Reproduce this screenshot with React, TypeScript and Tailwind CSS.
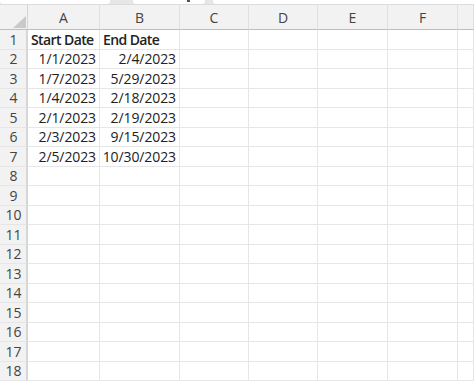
import React from "react";

const cols = ["A", "B", "C", "D", "E", "F", ""];
const data: Record<number, [string, string, boolean?]> = {
  1: ["Start Date", "End Date", true],
  2: ["1/1/2023", "2/4/2023"],
  3: ["1/7/2023", "5/29/2023"],
  4: ["1/4/2023", "2/18/2023"],
  5: ["2/1/2023", "2/19/2023"],
  6: ["2/3/2023", "9/15/2023"],
  7: ["2/5/2023", "10/30/2023"],
};

const rows = Array.from({ length: 18 }, (_, i) => i + 1);

export default function App() {
  return (
    <div
      className="w-[474px] h-[382px] overflow-hidden bg-white text-[#222]"
      style={{ fontFamily: '"Open Sans", "Noto Sans", sans-serif' }}
    >
      {/* toolbar remnants */}
      <div className="h-[4px] flex bg-[#e6e6e6]">
        <div className="w-[110px] bg-white rounded-b-[3px]" />
        <div className="w-[23px]" />
        <div className="w-[72px] bg-white rounded-b-[3px] relative">
          <div className="absolute left-[54px] top-0 w-[3px] h-[2px] bg-[#555]" />
        </div>
        <div className="w-[8px]" />
        <div className="flex-1 bg-white rounded-bl-[3px]" />
      </div>
      <div className="grid grid-cols-[28px_72px_80px_69px_69px_70px_70px_16px] grid-rows-[26px] auto-rows-[19.5px]">
        {/* header row */}
        <div className="bg-[#f2f2f2] border-t border-t-[#dcdcdc] border-b border-b-[#bdbdbd] border-r border-r-[#d4d4d4] relative">
          <svg className="absolute right-[1px] bottom-[1px]" width="13" height="12" viewBox="0 0 13 12">
            <polygon points="0,12 13,12 13,0" fill="#c9c9c9" />
          </svg>
        </div>
        {cols.map((c, i) => (
          <div
            key={i}
            className="bg-[#f2f2f2] border-t border-t-[#dcdcdc] border-b border-b-[#bdbdbd] border-r border-r-[#e0e0e0] flex items-center justify-center text-[14px] text-[#444] pt-[1px]"
          >
            {c}
          </div>
        ))}
        {rows.map((r) => {
          const d = data[r];
          return (
            <React.Fragment key={r}>
              <div className="bg-[#f2f2f2] border-r-2 border-r-[#d6d6d6] border-b border-b-[#e6e6e6] flex items-center justify-center text-[14px] text-[#444] pl-[1px]">
                {r}
              </div>
              {cols.map((_, ci) => {
                let content: React.ReactNode = null;
                let cls = "justify-end pr-[3px] tracking-[-0.1px]";
                if (d && ci < 2) {
                  content = d[ci];
                  if (d[2]) cls = "justify-start pl-[3px] font-semibold tracking-[-0.6px]";
                }
                return (
                  <div
                    key={ci}
                    className={`border-r border-r-[#e6e6e6] border-b border-b-[#e6e6e6] flex items-center text-[14px] whitespace-nowrap ${cls}`}
                  >
                    {content}
                  </div>
                );
              })}
            </React.Fragment>
          );
        })}
      </div>
    </div>
  );
}
